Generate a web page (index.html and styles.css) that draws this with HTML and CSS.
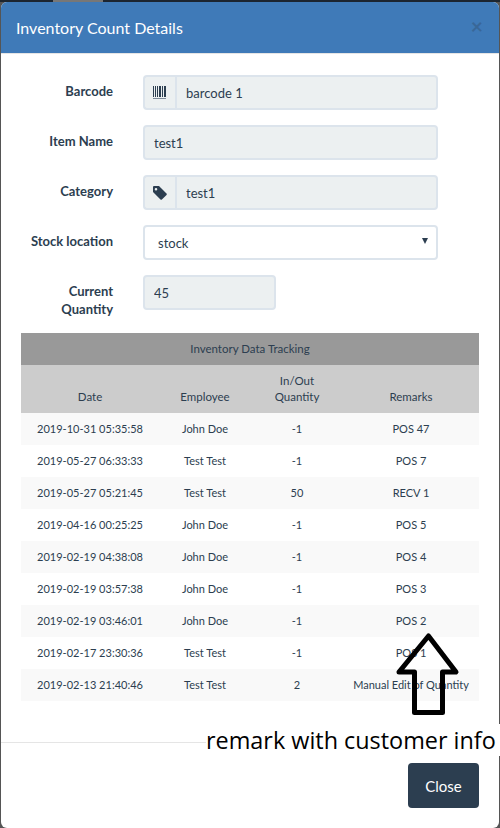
FILE: index.html
```html
<!DOCTYPE html>
<html lang="en">
<head>
    <meta charset="UTF-8">
    <title>Inventory Count Details</title>
    <link rel="stylesheet" href="styles.css">
</head>
<body>

<div class="backdrop-strip"><span class="backdrop-tab"></span></div>

<div class="modal">
    <header class="modal-header">
        <h4>Inventory Count Details</h4>
        <span class="modal-x">×</span>
    </header>

    <div class="modal-body">
        <div class="form-row">
            <label>Barcode</label>
            <div class="input-group">
                <span class="addon">
                    <svg width="14" height="14" viewBox="0 0 14 14" fill="#2c3e50">
                        <rect x="0" y="0" width="1" height="11"/>
                        <rect x="2" y="0" width="1" height="11"/>
                        <rect x="4" y="0" width="1" height="11"/>
                        <rect x="6" y="0" width="2" height="11"/>
                        <rect x="9" y="0" width="1" height="11"/>
                        <rect x="11" y="0" width="2" height="11"/>
                        <rect x="0" y="12" width="13" height="1" fill="#7f8c9a"/>
                    </svg>
                </span>
                <input class="field" type="text" value="barcode 1" readonly>
            </div>
        </div>
        <div class="form-row">
            <label>Item Name</label>
            <input class="field field-plain" type="text" value="test1" readonly>
        </div>
        <div class="form-row">
            <label>Category</label>
            <div class="input-group">
                <span class="addon">
                    <svg width="14" height="14" viewBox="0 0 14 14" fill="#2c3e50">
                        <path d="M1 0h5l7.500 7.500a1 1 0 0 1 0 1.400l-4.600 4.600a1 1 0 0 1-1.400 0L0 6V1a1 1 0 0 1 1-1zm2 2a1.300 1.300 0 1 0 0 2.600a1.300 1.300 0 0 0 0-2.600z"/>
                    </svg>
                </span>
                <input class="field" type="text" value="test1" readonly>
            </div>
        </div>
        <div class="form-row">
            <label>Stock location</label>
            <div class="select-box">
                <span>stock</span>
                <span class="caret"></span>
            </div>
        </div>
        <div class="form-row form-row-last">
            <label>Current<br>Quantity</label>
            <input class="field field-plain field-short" type="text" value="45" readonly>
        </div>

        <table class="tracking">
            <colgroup>
                <col class="col-date">
                <col class="col-emp">
                <col class="col-qty">
                <col class="col-remarks">
            </colgroup>
            <thead>
                <tr class="title-row"><th colspan="4">Inventory Data Tracking</th></tr>
                <tr class="head-row">
                    <th>Date</th>
                    <th>Employee</th>
                    <th>In/Out<br>Quantity</th>
                    <th>Remarks</th>
                </tr>
            </thead>
            <tbody>
                <tr><td>2019-10-31 05:35:58</td><td>John Doe</td><td>-1</td><td>POS 47</td></tr>
                <tr><td>2019-05-27 06:33:33</td><td>Test Test</td><td>-1</td><td>POS 7</td></tr>
                <tr><td>2019-05-27 05:21:45</td><td>Test Test</td><td>50</td><td>RECV 1</td></tr>
                <tr><td>2019-04-16 00:25:25</td><td>John Doe</td><td>-1</td><td>POS 5</td></tr>
                <tr><td>2019-02-19 04:38:08</td><td>John Doe</td><td>-1</td><td>POS 4</td></tr>
                <tr><td>2019-02-19 03:57:38</td><td>John Doe</td><td>-1</td><td>POS 3</td></tr>
                <tr><td>2019-02-19 03:46:01</td><td>John Doe</td><td>-1</td><td>POS 2</td></tr>
                <tr><td>2019-02-17 23:30:36</td><td>Test Test</td><td>-1</td><td>POS 1</td></tr>
                <tr><td>2019-02-13 21:40:46</td><td>Test Test</td><td>2</td><td>Manual Edit of Quantity</td></tr>
            </tbody>
        </table>
    </div>

    <footer class="modal-footer">
        <button class="btn-close">Close</button>
    </footer>
</div>

<!-- annotation added on top of the screenshot -->
<svg class="note-arrow" width="66" height="90" viewBox="0 0 66 90">
    <path d="M33.500 8 L61 44 H47.500 V84.500 H19.500 V44 H4 Z" fill="none" stroke="#000" stroke-width="5" stroke-linejoin="round"/>
</svg>
<div class="note-text">remark with customer info</div>

</body>
</html>
```

FILE: styles.css
```css
html, body { margin: 0; height: 828px; overflow: hidden; }
body { font-family: Lato, sans-serif; background: #555; color: #2c3e50; font-size: 13px; position: relative; }

.backdrop-strip { height: 2px; background: #1c2530; }
.backdrop-tab { display: block; width: 50px; height: 2px; margin-left: 53px; background: #777; }

.modal { margin-left: 1px; width: 498px; height: 826px; background: #fff; border-radius: 6px; display: flex; flex-direction: column; overflow: hidden; }

.modal-header { background: #3f7ab8; height: 52px; box-sizing: border-box; display: flex; justify-content: space-between; align-items: center; padding: 0 16px 0 15px; border-bottom: 1px solid #e5e5e5; flex: none; }
.modal-header h4 { margin: 0; font-size: 16px; font-weight: 400; color: #fff; }
.modal-x { font-size: 21px; font-weight: 700; color: #2c3e50; opacity: .3; margin-top: -5px; }

.modal-body { flex: 1; padding: 21px 20px 0; }

.form-row { display: flex; align-items: flex-start; margin-bottom: 15px; }
.form-row label { width: 92px; padding-top: 7px; margin-right: 30px; text-align: right; font-weight: 700; line-height: 18px; flex: none; }
.form-row-last { height: 43px; }

.input-group { display: flex; width: 295px; }
.addon { width: 32px; height: 35px; box-sizing: border-box; background: #ecf0f1; border: 2px solid #dce4ec; border-right: 0; border-radius: 4px 0 0 4px; display: flex; align-items: center; justify-content: center; flex: none; }
.field { height: 35px; box-sizing: border-box; border: 2px solid #dce4ec; background: #ecf0f1; color: #2c3e50; font: 13px Lato, sans-serif; padding: 0 9px; outline: none; width: 100%; border-radius: 0 4px 4px 0; }
.field-plain { width: 295px; border-radius: 4px; }
.field-short { width: 133px; }

.select-box { width: 295px; height: 35px; box-sizing: border-box; border: 2px solid #dce4ec; border-radius: 4px; padding: 0 8px 0 13px; font-size: 13px; display: flex; align-items: center; justify-content: space-between; }
.caret { width: 0; height: 0; border-left: 3px solid transparent; border-right: 3px solid transparent; border-top: 6px solid #2c3e50; margin-top: -3px; }

.tracking { width: 458px; border-collapse: collapse; font-size: 11px; table-layout: fixed; }
.tracking th { font-weight: 400; font-size: 11.500px; padding: 8px 0; text-align: center; line-height: 16px; }
.title-row th { background: #999; }
.head-row th { background: #ccc; vertical-align: bottom; }
.tracking td { text-align: center; padding: 8px 0; line-height: 16px; white-space: nowrap; }
.tracking tbody tr:nth-child(odd) { background: #f9f9f9; }
.col-date { width: 138px; }
.col-emp { width: 92px; }
.col-qty { width: 92px; }
.col-remarks { width: 136px; }

.modal-footer { border-top: 1px solid #e5e5e5; height: 86px; box-sizing: border-box; padding: 20px 20px 0; display: flex; justify-content: flex-end; flex: none; }
.btn-close { width: 71px; height: 45px; background: #2c3e50; color: #fff; border: none; border-radius: 4px; font: 15px Lato, sans-serif; }

.note-arrow { position: absolute; left: 395px; top: 628px; }
.note-text { position: absolute; left: 206px; top: 724px; padding-right: 4px; background: #fff; font-family: "Open Sans", sans-serif; font-size: 23.400px; color: #000; white-space: nowrap; line-height: 32px; }
```
